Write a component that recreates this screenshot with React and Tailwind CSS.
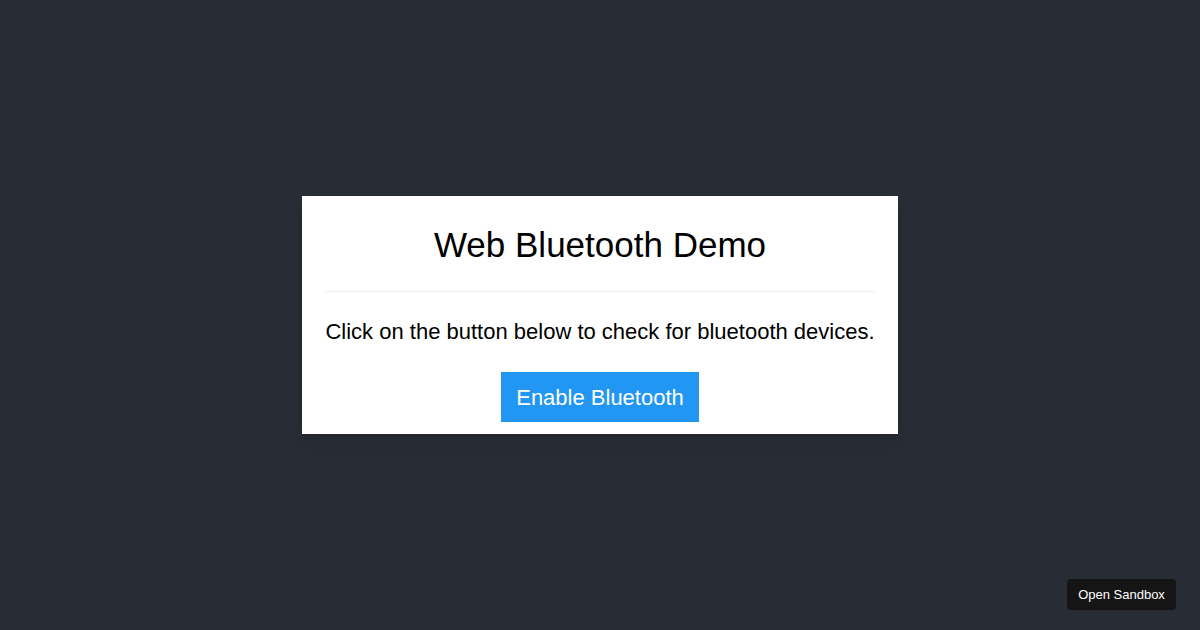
import React from 'react';

const App = () => {
  return (
    <div className="min-h-screen w-full bg-[#282c34] flex items-center justify-center font-['Liberation_Sans',Arial,sans-serif]">
      <div className="w-[596px] bg-white px-6 pt-[30px] pb-3 shadow-lg flex flex-col items-center">
        <h1 className="text-[35px] leading-[37px] text-black">Web Bluetooth Demo</h1>
        <div className="w-full h-px bg-[#eeeeee] mt-[28px]" />
        <p className="text-[22px] leading-[23px] text-black mt-[28px] whitespace-nowrap">
          Click on the button below to check for bluetooth devices.
        </p>
        <button className="mt-[29px] h-[50px] w-[198px] bg-[#2196f3] text-white text-[22px]">
          Enable Bluetooth
        </button>
      </div>

      <button className="fixed right-6 bottom-5 h-[31px] w-[109px] rounded bg-[#151515] text-white text-[13px]">
        Open Sandbox
      </button>
    </div>
  );
};

export default App;
